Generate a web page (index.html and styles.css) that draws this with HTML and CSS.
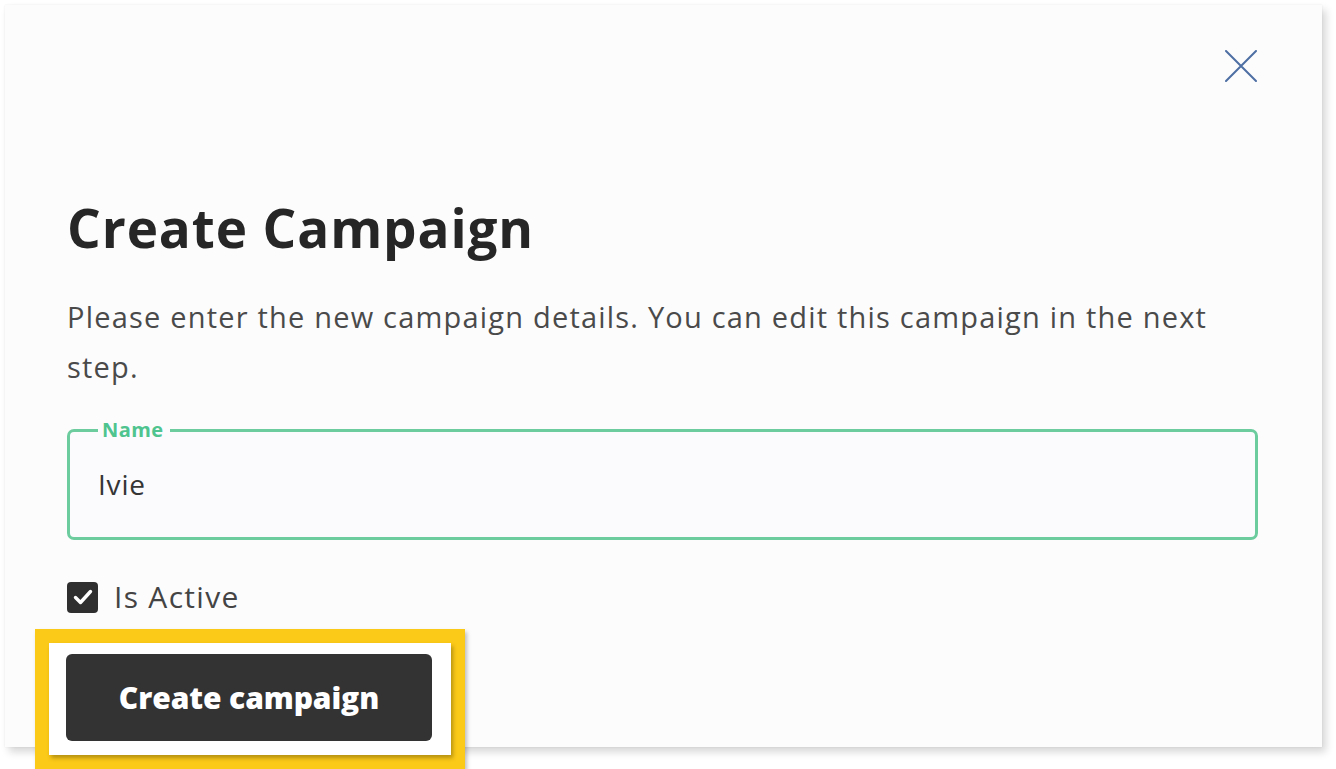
FILE: index.html
```html
<!DOCTYPE html>
<html lang="en">
<head>
<meta charset="utf-8">
<title>Create Campaign</title>
<link rel="stylesheet" href="styles.css">
</head>
<body>
<div class="card">
  <div class="topbar">
    <button class="close" aria-label="Close">
      <svg width="32" height="32" viewBox="0 0 32 32"><path d="M1 1 L31 31 M31 1 L1 31" stroke="#4d6fa3" stroke-width="2" fill="none" stroke-linecap="round"/></svg>
    </button>
  </div>
  <h1 class="title">Create Campaign</h1>
  <p class="intro">Please enter the new campaign details. You can edit this campaign in the next step.</p>
  <fieldset class="field">
    <legend class="field-label">Name</legend>
    <div class="field-value">Ivie</div>
  </fieldset>
  <label class="check">
    <span class="box"><svg width="22" height="22" viewBox="0 0 22 22"><path d="M3.5 11.5 L8.5 16.5 L18.5 5.5" stroke="#fff" stroke-width="3.4" fill="none" stroke-linecap="round" stroke-linejoin="round"/></svg></span>
    <span class="check-text">Is Active</span>
  </label>
  <div class="highlight">
    <div class="highlight-inner">
      <button class="primary">Create campaign</button>
    </div>
  </div>
</div>
</body>
</html>
```
FILE: styles.css
```css
* { box-sizing: border-box; }
html { background: #ffffff; height: 769px; overflow: hidden; }
body { margin: 0; padding: 0; height: 769px; font-family: "Open Sans", "Noto Sans", sans-serif; color: #2b2b2b; }

.card {
  margin: 5px 0 0 5px;
  width: 1317px;
  height: 742px;
  padding: 0 64px 0 62px;
  background: #fcfcfd;
  box-shadow: 4px 5px 8px rgba(0,0,0,0.16), 0 0 2px rgba(0,0,0,0.07);
}

.topbar { display: flex; justify-content: flex-end; padding-top: 45px; padding-right: 1px; }
.close { background: none; border: 0; padding: 0; width: 32px; height: 32px; }
.close svg { display: block; }

.title {
  margin: 116px 0 0 0;
  font-size: 53px;
  font-weight: 700;
  line-height: 60px;
  color: #262626;
  letter-spacing: 0.9px;
}

.intro {
  margin: 34px 0 0 0;
  font-size: 29px;
  line-height: 50px;
  color: #4a4a4a;
  letter-spacing: 1.2px;
}

.field {
  margin: 26px 0 0 0;
  padding: 0 0 0 28px;
  height: 122px;
  border: 3px solid #6ccc9e;
  border-radius: 7px;
  background: #fbfbfe;
  min-width: 0;
}
.field-label {
  padding: 0 7px 0 4px;
  font-size: 20px;
  font-weight: 700;
  color: #4fc48e;
  line-height: 24px;
  letter-spacing: 0.4px;
}
.field-value {
  margin-top: 24px;
  font-size: 28px;
  color: #353535;
  line-height: 36px;
  letter-spacing: 0.8px;
}

.check { display: flex; align-items: center; gap: 16px; margin-top: 40px; }
.box {
  width: 31px; height: 31px; border-radius: 4px; background: #2f2f2f;
  display: flex; align-items: center; justify-content: center;
}
.check-text { font-size: 30px; color: #444; line-height: 34px; letter-spacing: 1.3px; }

.highlight {
  display: inline-block;
  position: relative;
  margin: 15px 0 0 -32px;
  border: 14px solid #fbc918;
  box-shadow: 2px 3px 4px rgba(0,0,0,0.25);
}
.highlight-inner {
  background: #ffffff;
  padding: 11px 19px 14px 17px;
  box-shadow: 2px 3px 4px rgba(0,0,0,0.28);
}
.primary {
  display: block;
  width: 366px;
  height: 87px;
  border: 0;
  border-radius: 6px;
  background: #333333;
  color: #ffffff;
  font-family: "Open Sans", "Noto Sans", sans-serif;
  font-size: 30px;
  font-weight: 800;
  letter-spacing: -0.1px;
}
```
